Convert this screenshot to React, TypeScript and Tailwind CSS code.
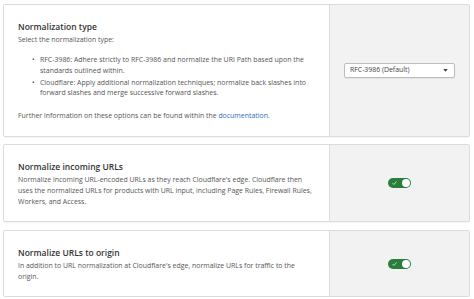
const Toggle = () => (
  <div className="flex h-[10px] w-[23px] items-center justify-between rounded-full bg-[#2a7d3c] pl-[4px] pr-[1px]">
    <svg width="5" height="4" viewBox="0 0 10 8" className="text-[#c9e8d0]">
      <path d="M1 4.2 L3.8 7 L9 1" fill="none" stroke="currentColor" strokeWidth="1.8" />
    </svg>
    <span className="h-[8px] w-[8px] rounded-full bg-white" />
  </div>
);

const Card = ({ children, control, className }: { children: React.ReactNode; control: React.ReactNode; className: string }) => (
  <div className="flex rounded-[2px] border border-[#dcdcdc] bg-white shadow-[0_1px_1px_rgba(0,0,0,0.04)]">
    <div className={`w-[326px] shrink-0 border-r border-[#dcdcdc] pl-[14px] pr-[12px] ${className}`}>{children}</div>
    <div className="flex flex-1 items-center justify-center bg-[#f2f2f2]">{control}</div>
  </div>
);

const Bullet = ({ children, className = '' }: { children: React.ReactNode; className?: string }) => (
  <div className={`flex ${className}`}>
    <span className="w-[22px] shrink-0 pl-[14px] text-[#555]">•</span>
    <span>{children}</span>
  </div>
);

export default function App() {
  return (
    <div
      className="flex w-[474px] flex-col gap-[7px] bg-white pl-[3px] pr-[4px] pt-[4px] text-[#555]"
      style={{ fontFamily: '"Open Sans", "Liberation Sans", sans-serif' }}
    >
      <Card
        className="pb-[15px] pt-[15px]"
        control={
          <div className="flex h-[15px] w-[111px] items-center justify-between rounded-[2px] border border-[#bdbdbd] bg-white pl-[5px] pr-[6px] shadow-[0_1px_1px_rgba(0,0,0,0.06)]">
            <span className="text-[6.9px] leading-none text-[#444]">RFC-3986 (Default)</span>
            <svg width="5" height="3" viewBox="0 0 6 4">
              <path d="M0 0 H6 L3 3.5 Z" fill="#444" />
            </svg>
          </div>
        }
      >
        <h2 className="text-[8.5px] font-semibold leading-[13px] text-[#333]">Normalization type</h2>
        <p className="mt-[1px] text-[6.95px] leading-[11px]">Select the normalization type:</p>
        <div className="mt-[10px] text-[6.95px] leading-[10.8px]">
          <Bullet>RFC-3986: Adhere strictly to RFC-3986 and normalize the URI Path based upon the standards outlined within.</Bullet>
          <Bullet className="mt-[1px]">
            Cloudflare: Apply additional normalization techniques; normalize back slashes into forward slashes and merge successive forward slashes.
          </Bullet>
        </div>
        <p className="mt-[11px] text-[6.95px] leading-[11px]">
          Further information on these options can be found within the <span className="text-[#2f6db5]">documentation</span>.
        </p>
      </Card>

      <Card className="pb-[14px] pt-[15px]" control={<Toggle />}>
        <h2 className="text-[8.5px] font-semibold leading-[13px] text-[#333]">Normalize incoming URLs</h2>
        <p className="mt-[1px] text-[6.95px] leading-[11px]">
          Normalize incoming URL-encoded URLs as they reach Cloudflare's edge. Cloudflare then uses the normalized URLs for products with URL input, including Page Rules, Firewall Rules, Workers, and Access.
        </p>
      </Card>

      <div className="mt-[1px]">
        <Card className="pb-[14px] pt-[15px]" control={<Toggle />}>
          <h2 className="text-[8.5px] font-semibold leading-[13px] text-[#333]">Normalize URLs to origin</h2>
          <p className="mt-[1px] text-[6.95px] leading-[11px]">
            In addition to URL normalization at Cloudflare's edge, normalize URLs for traffic to the origin.
          </p>
        </Card>
      </div>
    </div>
  );
}
